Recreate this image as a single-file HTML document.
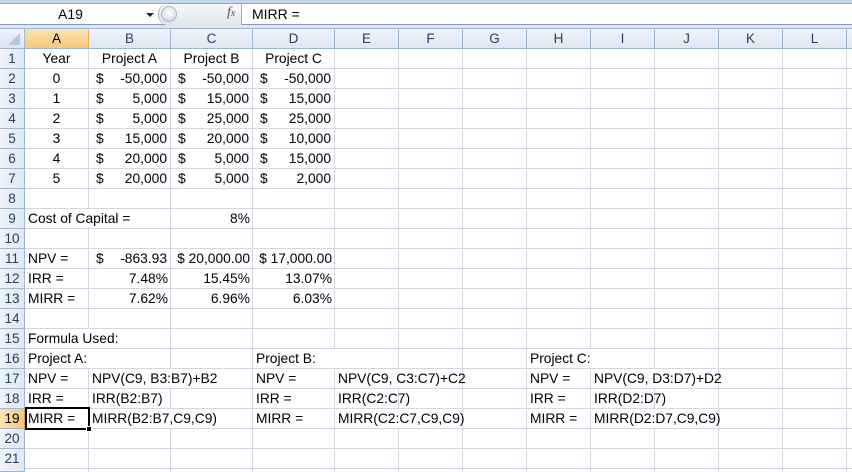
<!DOCTYPE html>
<html style="width:852px;height:472px;overflow:hidden"><head><meta charset="utf-8"><style>
*{margin:0;padding:0;box-sizing:border-box}
body{width:852px;height:472px;overflow:hidden;background:#fff;font-family:"Liberation Sans",Arial,sans-serif;font-size:13.8px;color:#000;position:relative}
.a{position:absolute;white-space:nowrap}
.v{position:absolute;top:49px;width:1px;height:423px;background:#d0d7e5}
.h{position:absolute;left:25px;width:827px;height:1px;background:#d0d7e5}
.t{position:absolute;height:19px;line-height:20px;white-space:nowrap}
.r{text-align:right}
.ch{position:absolute;top:29px;height:20px;line-height:20px;text-align:center;color:#27415f;font-size:13.5px;border-right:1px solid #9eb6ce;background:linear-gradient(#f1f5fb,#dde6f2)}
.rh{position:absolute;left:0;width:25px;height:20px;line-height:20px;text-align:center;color:#27415f;font-size:13.5px;background:linear-gradient(90deg,#eef3fa,#dfe8f4);border-bottom:1px solid #9eb6ce;border-right:1px solid #9eb6ce}
</style></head><body>
<div class="a" style="left:0;top:0;width:852px;height:4px;background:#c5d5ea;border-bottom:1px solid #8ea7c8"></div>
<div class="a" style="left:0;top:4px;width:852px;height:21px;background:#fff;border-bottom:1px solid #7f9dc4"></div>
<div class="a" style="left:0;top:25px;width:852px;height:4px;background:#dfe6f0;border-bottom:1px solid #9eb6ce"></div>
<div class="a" style="left:58px;top:6px;font-size:14px">A19</div>
<div class="a" style="left:146px;top:13px;width:0;height:0;border-left:4px solid transparent;border-right:4px solid transparent;border-top:4px solid #222"></div>
<div class="a" style="left:158px;top:4px;width:84px;height:21px;border-left:1px solid #aab;border-right:1px solid #aab;background:linear-gradient(#f7f9fc,#dfe6ef);border-radius:10px 0 0 10px"></div>
<div class="a" style="left:161px;top:6px;width:16px;height:16px;border-radius:8px;background:radial-gradient(circle at 50% 40%,#fff,#c9d2dd);border:1px solid #a7b2c0"></div>
<div class="a" style="left:227px;top:5px;font-family:'Liberation Serif',serif;font-style:italic;font-size:14px;color:#555">f<span style="font-size:10px">x</span></div>
<div class="a" style="left:252px;top:6px;font-size:14px">MIRR =</div>
<div class="a" style="left:0;top:29px;width:25px;height:20px;background:linear-gradient(#eef3fa,#dbe4f1);border-right:1px solid #9eb6ce;border-bottom:1px solid #9eb6ce"></div>
<div class="a" style="left:8px;top:33px;width:0;height:0;border-left:12px solid transparent;border-bottom:12px solid #b8c8dc"></div>
<div class="ch" style="left:25px;width:64px;background:linear-gradient(#fbe3b2,#f6c87b);border-right-color:#f2a94e;border-bottom:1px solid #f29436;color:#000">A</div>
<div class="ch" style="left:89px;width:82px">B</div>
<div class="ch" style="left:171px;width:82px">C</div>
<div class="ch" style="left:253px;width:82px">D</div>
<div class="ch" style="left:335px;width:64px">E</div>
<div class="ch" style="left:399px;width:64px">F</div>
<div class="ch" style="left:463px;width:64px">G</div>
<div class="ch" style="left:527px;width:64px">H</div>
<div class="ch" style="left:591px;width:64px">I</div>
<div class="ch" style="left:655px;width:64px">J</div>
<div class="ch" style="left:719px;width:64px">K</div>
<div class="ch" style="left:783px;width:64px">L</div>
<div class="ch" style="left:847px;width:10px"></div>
<div class="a" style="left:0;top:48px;width:852px;height:1px;background:#9eb6ce"></div>
<div class="rh" style="top:49px">1</div><div class="rh" style="top:69px">2</div><div class="rh" style="top:89px">3</div><div class="rh" style="top:109px">4</div><div class="rh" style="top:129px">5</div><div class="rh" style="top:149px">6</div><div class="rh" style="top:169px">7</div><div class="rh" style="top:189px">8</div><div class="rh" style="top:209px">9</div><div class="rh" style="top:229px">10</div><div class="rh" style="top:249px">11</div><div class="rh" style="top:269px">12</div><div class="rh" style="top:289px">13</div><div class="rh" style="top:309px">14</div><div class="rh" style="top:329px">15</div><div class="rh" style="top:349px">16</div><div class="rh" style="top:369px">17</div><div class="rh" style="top:389px">18</div><div class="rh" style="top:409px;background:linear-gradient(90deg,#fbe3b2,#f6c87b);color:#000;border-right-color:#f29436">19</div><div class="rh" style="top:429px">20</div><div class="rh" style="top:449px;height:23px">21</div>
<div class="v" style="left:88px"></div><div class="v" style="left:170px"></div><div class="v" style="left:252px"></div><div class="v" style="left:334px"></div><div class="v" style="left:398px"></div><div class="v" style="left:462px"></div><div class="v" style="left:526px"></div><div class="v" style="left:590px"></div><div class="v" style="left:654px"></div><div class="v" style="left:718px"></div><div class="v" style="left:782px"></div><div class="v" style="left:846px"></div>
<div class="h" style="top:68px"></div><div class="h" style="top:88px"></div><div class="h" style="top:108px"></div><div class="h" style="top:128px"></div><div class="h" style="top:148px"></div><div class="h" style="top:168px"></div><div class="h" style="top:188px"></div><div class="h" style="top:208px"></div><div class="h" style="top:228px"></div><div class="h" style="top:248px"></div><div class="h" style="top:268px"></div><div class="h" style="top:288px"></div><div class="h" style="top:308px"></div><div class="h" style="top:328px"></div><div class="h" style="top:348px"></div><div class="h" style="top:368px"></div><div class="h" style="top:388px"></div><div class="h" style="top:408px"></div><div class="h" style="top:428px"></div><div class="h" style="top:448px"></div><div class="h" style="top:468px"></div>
<div class="t" style="top:49px;left:25px;width:63px;text-align:center">Year</div>
<div class="t" style="top:49px;left:89px;width:81px;text-align:center">Project A</div>
<div class="t" style="top:49px;left:171px;width:81px;text-align:center">Project B</div>
<div class="t" style="top:49px;left:253px;width:81px;text-align:center">Project C</div>
<div class="t" style="top:69px;left:25px;width:63px;text-align:center">0</div>
<div class="t" style="top:89px;left:25px;width:63px;text-align:center">1</div>
<div class="t" style="top:109px;left:25px;width:63px;text-align:center">2</div>
<div class="t" style="top:129px;left:25px;width:63px;text-align:center">3</div>
<div class="t" style="top:149px;left:25px;width:63px;text-align:center">4</div>
<div class="t" style="top:169px;left:25px;width:63px;text-align:center">5</div>
<div class="t" style="top:69px;left:96px">$</div><div class="t r" style="top:69px;left:89px;width:78px">-50,000</div>
<div class="t" style="top:89px;left:96px">$</div><div class="t r" style="top:89px;left:89px;width:78px">5,000</div>
<div class="t" style="top:109px;left:96px">$</div><div class="t r" style="top:109px;left:89px;width:78px">5,000</div>
<div class="t" style="top:129px;left:96px">$</div><div class="t r" style="top:129px;left:89px;width:78px">15,000</div>
<div class="t" style="top:149px;left:96px">$</div><div class="t r" style="top:149px;left:89px;width:78px">20,000</div>
<div class="t" style="top:169px;left:96px">$</div><div class="t r" style="top:169px;left:89px;width:78px">20,000</div>
<div class="t" style="top:69px;left:178px">$</div><div class="t r" style="top:69px;left:171px;width:78px">-50,000</div>
<div class="t" style="top:89px;left:178px">$</div><div class="t r" style="top:89px;left:171px;width:78px">15,000</div>
<div class="t" style="top:109px;left:178px">$</div><div class="t r" style="top:109px;left:171px;width:78px">25,000</div>
<div class="t" style="top:129px;left:178px">$</div><div class="t r" style="top:129px;left:171px;width:78px">20,000</div>
<div class="t" style="top:149px;left:178px">$</div><div class="t r" style="top:149px;left:171px;width:78px">5,000</div>
<div class="t" style="top:169px;left:178px">$</div><div class="t r" style="top:169px;left:171px;width:78px">5,000</div>
<div class="t" style="top:69px;left:260px">$</div><div class="t r" style="top:69px;left:253px;width:78px">-50,000</div>
<div class="t" style="top:89px;left:260px">$</div><div class="t r" style="top:89px;left:253px;width:78px">15,000</div>
<div class="t" style="top:109px;left:260px">$</div><div class="t r" style="top:109px;left:253px;width:78px">25,000</div>
<div class="t" style="top:129px;left:260px">$</div><div class="t r" style="top:129px;left:253px;width:78px">10,000</div>
<div class="t" style="top:149px;left:260px">$</div><div class="t r" style="top:149px;left:253px;width:78px">15,000</div>
<div class="t" style="top:169px;left:260px">$</div><div class="t r" style="top:169px;left:253px;width:78px">2,000</div>
<div class="t" style="top:209px;left:26px;width:144px;padding-left:2px;background:#fff">Cost of Capital =</div>
<div class="t r" style="top:209px;left:171px;width:79px">8%</div>
<div class="t" style="top:249px;left:28px">NPV =</div>
<div class="t" style="top:249px;left:96px">$</div><div class="t r" style="top:249px;left:89px;width:78px">-863.93</div>
<div class="t r" style="top:249px;left:171px;width:79px">$ 20,000.00</div>
<div class="t r" style="top:249px;left:253px;width:79px">$ 17,000.00</div>
<div class="t" style="top:269px;left:28px">IRR =</div>
<div class="t r" style="top:269px;left:89px;width:79px">7.48%</div>
<div class="t r" style="top:269px;left:171px;width:79px">15.45%</div>
<div class="t r" style="top:269px;left:253px;width:79px">13.07%</div>
<div class="t" style="top:289px;left:28px">MIRR =</div>
<div class="t r" style="top:289px;left:89px;width:79px">7.62%</div>
<div class="t r" style="top:289px;left:171px;width:79px">6.96%</div>
<div class="t r" style="top:289px;left:253px;width:79px">6.03%</div>
<div class="t" style="top:329px;left:26px;width:144px;padding-left:2px;background:#fff">Formula Used:</div>
<div class="t" style="top:349px;left:26px;width:144px;padding-left:2px;background:#fff">Project A:</div>
<div class="t" style="top:349px;left:254px;width:144px;padding-left:2px;background:#fff">Project B:</div>
<div class="t" style="top:349px;left:528px;width:126px;padding-left:2px;background:#fff">Project C:</div>
<div class="t" style="top:369px;left:28px">NPV =</div>
<div class="t" style="top:369px;left:90px;width:160px;padding-left:2px;background:#fff">NPV(C9, B3:B7)+B2</div>
<div class="t" style="top:369px;left:256px">NPV =</div>
<div class="t" style="top:369px;left:336px;width:126px;padding-left:2px;background:#fff">NPV(C9, C3:C7)+C2</div>
<div class="t" style="top:369px;left:530px">NPV =</div>
<div class="t" style="top:369px;left:592px;width:126px;padding-left:2px;background:#fff">NPV(C9, D3:D7)+D2</div>
<div class="t" style="top:389px;left:28px">IRR =</div>
<div class="t" style="top:389px;left:92px">IRR(B2:B7)</div>
<div class="t" style="top:389px;left:256px">IRR =</div>
<div class="t" style="top:389px;left:338px">IRR(C2:C7)</div>
<div class="t" style="top:389px;left:530px">IRR =</div>
<div class="t" style="top:389px;left:594px">IRR(D2:D7)</div>
<div class="t" style="top:409px;left:28px">MIRR =</div>
<div class="t" style="top:409px;left:90px;width:160px;padding-left:2px;background:#fff">MIRR(B2:B7,C9,C9)</div>
<div class="t" style="top:409px;left:256px">MIRR =</div>
<div class="t" style="top:409px;left:336px;width:126px;padding-left:2px;background:#fff">MIRR(C2:C7,C9,C9)</div>
<div class="t" style="top:409px;left:530px">MIRR =</div>
<div class="t" style="top:409px;left:592px;width:126px;padding-left:2px;background:#fff">MIRR(D2:D7,C9,C9)</div>
<div class="a" style="left:25px;top:407px;width:65px;height:23px;border:2px solid #000"></div>
<div class="a" style="left:86px;top:426px;width:6px;height:6px;background:#000;border:1px solid #fff"></div>
</body></html>
